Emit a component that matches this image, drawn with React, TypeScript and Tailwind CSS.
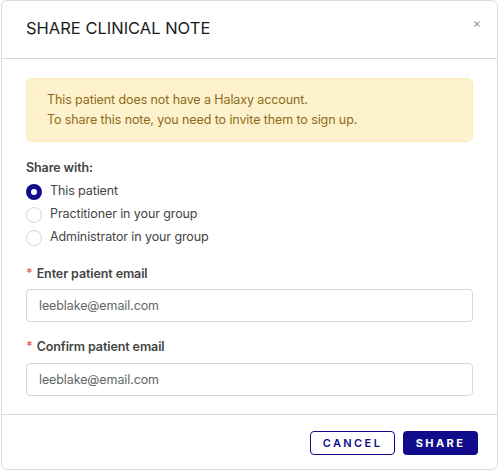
import { useState } from 'react';

const options = ['This patient', 'Practitioner in your group', 'Administrator in your group'];

export default function App() {
  const [shareWith, setShareWith] = useState(0);
  const [email, setEmail] = useState('leeblake@email.com');
  const [confirmEmail, setConfirmEmail] = useState('leeblake@email.com');

  return (
    <div className="w-[500px] h-[471px] bg-white font-['Inter',sans-serif]">
      <div className="ml-px w-[497px] h-[470px] border border-[#d9dbe0] rounded-md bg-white flex flex-col">
        {/* Header */}
        <div className="h-[58px] shrink-0 border-b border-[#d6d8de] flex items-center justify-between pl-6 pr-[16px]">
          <h1 className="text-[16.5px] text-[#1b1b1b] -mt-[2px]">SHARE CLINICAL NOTE</h1>
          <button className="text-[#9a9a9a] text-[13px] leading-none -mt-[12px]">×</button>
        </div>

        {/* Body */}
        <div className="flex-1 px-6 pt-[19px] text-[12.5px] tracking-[-0.1px]">
          <div className="rounded-md border border-[#fbeab5] bg-[#fdf2cd] px-5 py-[11px] leading-[20px] text-[#8d6b18]">
            <p>This patient does not have a Halaxy account.</p>
            <p>To share this note, you need to invite them to sign up.</p>
          </div>

          <p className="mt-[16px] leading-[20px] font-semibold text-[#444]">Share with:</p>
          <div className="mt-[2px] flex flex-col">
            {options.map((opt, i) => (
              <label key={opt} className="h-[23px] flex items-center gap-2 cursor-pointer" onClick={() => setShareWith(i)}>
                {shareWith === i ? (
                  <span className="w-4 h-4 rounded-full bg-[#110c8c] flex items-center justify-center">
                    <span className="w-[6px] h-[6px] rounded-full bg-white" />
                  </span>
                ) : (
                  <span className="w-4 h-4 rounded-full border border-[#d3d5da] bg-white" />
                )}
                <span className="text-[#444]">{opt}</span>
              </label>
            ))}
          </div>

          <p className="mt-[15px] leading-[20px] font-semibold text-[#444]">
            <span className="text-[#e5645e] mr-[4px]">*</span>Enter patient email
          </p>
          <input
            value={email}
            onChange={(e) => setEmail(e.target.value)}
            className="mt-[5px] w-full h-[33px] rounded border border-[#d3d6dd] px-3 text-[#666] outline-none"
          />

          <p className="mt-[15px] leading-[20px] font-semibold text-[#444]">
            <span className="text-[#e5645e] mr-[4px]">*</span>Confirm patient email
          </p>
          <input
            value={confirmEmail}
            onChange={(e) => setConfirmEmail(e.target.value)}
            className="mt-[6px] w-full h-[33px] rounded border border-[#d3d6dd] px-3 text-[#666] outline-none"
          />
        </div>

        {/* Footer */}
        <div className="h-[55px] shrink-0 border-t border-[#d6d8de] flex items-start justify-end gap-2 pr-[19px] pt-[16px]">
          <button className="w-[85px] h-[24px] rounded border border-[#110c8c] text-[#110c8c] text-[11px] font-semibold tracking-[2.4px]">
            CANCEL
          </button>
          <button className="w-[75px] h-[24px] rounded bg-[#110c8c] text-white text-[11px] font-bold tracking-[2.4px]">
            SHARE
          </button>
        </div>
      </div>
    </div>
  );
}
